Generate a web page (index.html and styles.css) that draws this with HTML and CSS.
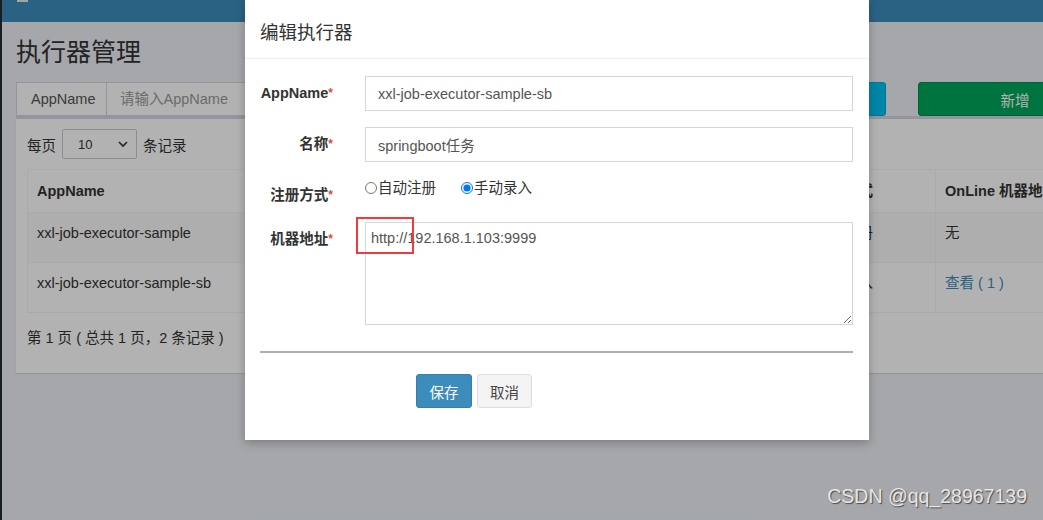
FILE: index.html
```html
<!DOCTYPE html>
<html lang="zh-CN">
<head>
    <meta charset="UTF-8">
    <title>执行器管理</title>
    <link rel="stylesheet" href="styles.css">
</head>
<body>

    <div class="page">
        <!-- Top bar -->
        <header class="main-header">
            <span class="logo-mark"></span>
        </header>

        <!-- Page content -->
        <section class="content">
            <h1>执行器管理</h1>

            <div class="search-row">
                <div class="input-group">
                    <span class="addon">AppName</span>
                    <span class="search-input">请输入AppName</span>
                </div>
                <button class="btn btn-info">搜索</button>
                <button class="btn btn-success">新增</button>
            </div>

            <div class="box">
                <div class="page-size">
                    每页
                    <span class="select">10
                        <svg width="12" height="8" viewBox="0 0 12 8"><path d="M2 2l4 4 4-4" fill="none" stroke="#333" stroke-width="1.6"/></svg>
                    </span>
                    条记录
                </div>

                <table class="data-table">
                    <colgroup>
                        <col class="c-app">
                        <col class="c-name">
                        <col class="c-order">
                        <col class="c-type">
                        <col class="c-online">
                    </colgroup>
                    <thead>
                        <tr>
                            <th>AppName</th>
                            <th>名称</th>
                            <th>排序</th>
                            <th>注册方式</th>
                            <th>OnLine 机器地址</th>
                        </tr>
                    </thead>
                    <tbody>
                        <tr>
                            <td>xxl-job-executor-sample</td>
                            <td>示例执行器</td>
                            <td>1</td>
                            <td>自动注册</td>
                            <td>无</td>
                        </tr>
                        <tr>
                            <td>xxl-job-executor-sample-sb</td>
                            <td>springboot任务</td>
                            <td>1</td>
                            <td>手动录入</td>
                            <td><a href="#">查看 ( 1 )</a></td>
                        </tr>
                    </tbody>
                </table>

                <p class="pager-info">第 1 页 ( 总共 1 页，2 条记录 )</p>
            </div>
        </section>
    </div>

    <!-- Modal backdrop -->
    <div class="backdrop"></div>

    <!-- Edit executor modal -->
    <div class="modal">
        <div class="modal-header">编辑执行器</div>
        <div class="modal-body">
            <div class="form-row">
                <label>AppName<span class="req">*</span></label>
                <input type="text" value="xxl-job-executor-sample-sb">
            </div>
            <div class="form-row">
                <label>名称<span class="req">*</span></label>
                <input type="text" value="springboot任务">
            </div>
            <div class="form-row">
                <label>注册方式<span class="req">*</span></label>
                <div class="radios">
                    <label class="radio"><input type="radio" name="addressType">自动注册</label>
                    <label class="radio"><input type="radio" name="addressType" checked>手动录入</label>
                </div>
            </div>
            <div class="form-row">
                <label>机器地址<span class="req">*</span></label>
                <textarea>http://192.168.1.103:9999</textarea>
            </div>

            <hr class="divider">

            <div class="actions">
                <button class="btn btn-primary">保存</button>
                <button class="btn btn-default">取消</button>
            </div>

            <!-- annotation box from the screenshot -->
            <div class="mark"></div>
        </div>
    </div>

    <div class="watermark">CSDN @qq_28967139</div>

</body>
</html>
```

FILE: styles.css
```css
/* Base page */
body {
    margin: 0;
    width: 1043px;
    height: 520px;
    overflow: hidden;
    position: relative;
    font-family: "Liberation Sans", "Noto Sans CJK SC", sans-serif;
    font-size: 14.5px;
    color: #333;
    background-color: #ecf0f5;
}

.page {
    border-left: 2px solid #222d32;
    height: 520px;
    box-sizing: border-box;
}

.main-header {
    height: 22px;
    background-color: #3c8dbc;
}

.logo-mark {
    display: block;
    width: 11px;
    height: 2px;
    margin-left: 15px;
    background-color: #e4ecf2;
}

/* Content area */
.content {
    padding-left: 14px;
    width: 1096px;
}

h1 {
    margin: 15px 0 0;
    font-size: 25px;
    font-weight: normal;
    line-height: 30px;
    color: #333;
}

.search-row {
    display: grid;
    grid-template-columns: 1fr 106px 194px;
    column-gap: 32px;
    margin-top: 15px;
    height: 34px;
}

.input-group {
    display: flex;
    width: 330px;
}

.addon {
    width: 91px;
    box-sizing: border-box;
    padding-left: 14px;
    line-height: 32px;
    background-color: #fff;
    border: 1px solid #d2d6de;
    color: #555;
}

.search-input {
    flex: 1;
    padding-left: 13px;
    line-height: 32px;
    background-color: #fff;
    border: 1px solid #d2d6de;
    border-left: none;
    color: #999;
}

.btn {
    font-family: inherit;
    font-size: 14.5px;
    border-radius: 3px;
    border: 1px solid transparent;
    cursor: pointer;
}

.btn-info {
    background-color: #00c0ef;
    border-color: #00acd6;
    color: #fff;
}

.btn-success {
    background-color: #00a65a;
    border-color: #008d4c;
    color: #fff;
}

/* Box with the table */
.box {
    background-color: #fff;
    border-top: 3px solid #d2d6de;
    padding: 10px 10px 25px 11px;
    box-shadow: 0 1px 1px rgba(0, 0, 0, 0.1);
}

.page-size {
    display: flex;
    align-items: center;
    gap: 6px;
    height: 30px;
}

.select {
    display: flex;
    align-items: center;
    justify-content: space-between;
    width: 75px;
    height: 30px;
    box-sizing: border-box;
    padding: 0 7px 0 15px;
    border: 1px solid #ccc;
    border-radius: 2px;
    font-size: 13px;
}

.data-table {
    margin-top: 10px;
    width: 1074px;
    table-layout: fixed;
    border-collapse: collapse;
    border: 1px solid #f4f4f4;
}

.c-app { width: 233px; }
.c-name { width: 300px; }
.c-order { width: 245px; }
.c-type { width: 130px; }

.data-table th,
.data-table td {
    text-align: left;
    border: 1px solid #f4f4f4;
    padding: 10px 10px 0 9px;
    line-height: 20px;
    vertical-align: top;
    white-space: nowrap;
}

.data-table th {
    height: 31px;
    padding-top: 11px;
    font-weight: bold;
}

.data-table td {
    height: 39px;
}

.data-table tbody tr:nth-child(odd) {
    background-color: #f9f9f9;
}

.data-table a {
    color: #3c8dbc;
    text-decoration: none;
}

.pager-info {
    margin: 15px 0 0;
    line-height: 20px;
}

/* Modal */
.backdrop {
    position: absolute;
    inset: 0;
    background-color: rgba(0, 0, 0, 0.3);
}

.modal {
    position: absolute;
    left: 245px;
    top: 0;
    width: 624px;
    height: 440px;
    background-color: #fff;
    box-shadow: 0 3px 9px rgba(0, 0, 0, 0.25);
}

.modal-header {
    height: 59px;
    box-sizing: border-box;
    padding: 4px 0 0 15px;
    border-bottom: 1px solid #f0f0f0;
    display: flex;
    align-items: center;
    font-size: 18.5px;
    color: #333;
}

.modal-body {
    position: relative;
    padding: 17px 16px 0 15px;
}

.form-row {
    display: grid;
    grid-template-columns: 75px 488px;
    column-gap: 30px;
    margin-bottom: 16px;
}

.form-row > label {
    text-align: right;
    font-weight: bold;
    padding: 7px 2px 0 0;
    line-height: 20px;
    white-space: nowrap;
}

.req {
    color: #dd4b39;
    font-size: 12px;
    vertical-align: top;
}

.form-row input[type="text"],
.form-row textarea {
    height: 35px;
    box-sizing: border-box;
    padding: 6px 12px;
    border: 1px solid #d2d6de;
    border-radius: 0;
    font-family: inherit;
    font-size: 14.5px;
    color: #555;
    outline: none;
}

.form-row textarea {
    height: 103px;
    padding: 5px 5px;
    resize: vertical;
    line-height: 20px;
}

.radios {
    display: flex;
    gap: 25px;
    height: 28px;
    line-height: 20px;
}

.radio {
    display: flex;
    align-items: flex-start;
}

.radio input {
    margin: 4px 1px 0 0;
    width: 12px;
    height: 12px;
}

.divider {
    margin: 26px 0 0;
    border: none;
    border-top: 2px solid #b0b0b0;
}

.actions {
    display: flex;
    gap: 5px;
    margin: 21px 0 0 156px;
}

.btn-primary {
    width: 56px;
    height: 34px;
    background-color: #3c8dbc;
    border-color: #367fa9;
    color: #fff;
}

.btn-default {
    width: 55px;
    height: 34px;
    background-color: #f4f4f4;
    border-color: #ddd;
    color: #444;
}

.mark {
    position: absolute;
    left: 111px;
    top: 158px;
    width: 54px;
    height: 33px;
    border: 2px solid #f23a3a;
}

.watermark {
    position: absolute;
    right: 16px;
    bottom: 12px;
    font-size: 19.5px;
    color: #e6e6e6;
    text-shadow: 1px 1px 1px #4a4a4a;
}
```
